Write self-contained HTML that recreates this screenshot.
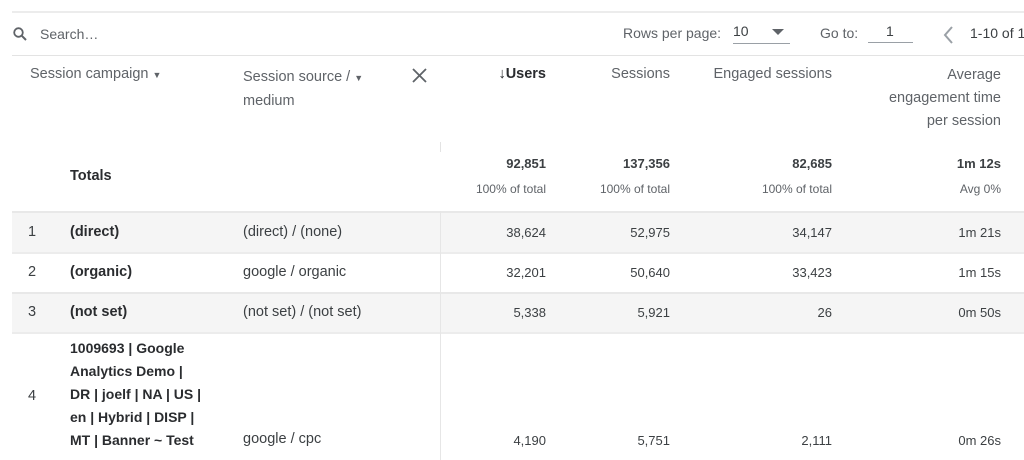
<html><head><style>
body{margin:0;width:1024px;height:460px;overflow:hidden;background:#fff;font-family:"Liberation Sans",sans-serif;color:#3c4043;position:relative}
.a{position:absolute;white-space:nowrap}
.h{color:#5f6368;font-size:14.5px}
.r{text-align:right}
.line{position:absolute;left:12px;right:0;height:1px;background:#e3e3e3}
.row{position:absolute;left:12px;right:0;height:40px}
.d{font-size:14.5px;color:#3c4043}
.b{font-weight:bold;color:#2a2c2f}
.n{font-size:13px;color:#3c4043}
.s{font-size:12px;color:#5f6368}
</style></head><body>
<div class="line" style="top:11px;height:2px;background:#ececec"></div>
<svg class="a" style="left:12px;top:26px" width="16" height="16" viewBox="0 0 16 16"><circle cx="6.5" cy="6.5" r="4.3" fill="none" stroke="#5f6368" stroke-width="1.8"/><path d="M9.7 9.7L14 14" stroke="#5f6368" stroke-width="2"/></svg>
<div class="a h" style="left:40px;top:26px;font-size:14px">Search…</div>
<div class="a h" style="left:623px;top:25px;font-size:14px">Rows per page:</div>
<div class="a" style="left:733px;top:23px;font-size:14px;color:#3c4043">10</div>
<svg class="a" style="left:772px;top:29px" width="12" height="7"><path d="M0 0h12L6 6z" fill="#5f6368"/></svg>
<div class="a" style="left:733px;top:43px;width:57px;height:1px;background:#9aa0a6"></div>
<div class="a h" style="left:820px;top:25px;font-size:14px">Go to:</div>
<div class="a" style="left:886px;top:23px;font-size:14px;color:#3c4043">1</div>
<div class="a" style="left:868px;top:42px;width:45px;height:1px;background:#9aa0a6"></div>
<svg class="a" style="left:942px;top:25px" width="12" height="20"><path d="M10 2L3 10l7 8" fill="none" stroke="#9aa0a6" stroke-width="2"/></svg>
<div class="a" style="left:970px;top:25px;font-size:14px;color:#3c4043">1-10 of 1</div>
<div class="line" style="top:55px"></div>

<div class="a h" style="left:30px;top:66px">Session campaign <span style="font-size:9px">▼</span></div>
<div class="a h" style="left:243px;top:66px;line-height:23px">Session source / <span style="font-size:9px">▼</span><br>medium</div>
<svg class="a" style="left:412px;top:68px" width="15" height="15"><path d="M1 1L14 14M14 1L1 14" stroke="#5f6368" stroke-width="1.8"/></svg>
<div class="a r b" style="right:478px;top:66px;font-size:14.5px">↓Users</div>
<div class="a h r" style="right:354px;top:66px">Sessions</div>
<div class="a h r" style="right:192px;top:66px">Engaged sessions</div>
<div class="a h r" style="right:23px;top:64px;line-height:23px">Average<br>engagement time<br>per session</div>

<div class="a" style="left:440px;top:142px;width:1px;height:10px;background:#e3e3e3"></div>
<div class="a d b" style="left:70px;top:168px">Totals</div>
<div class="a r n b" style="right:478px;top:156px">92,851</div>
<div class="a r s" style="right:478px;top:182px">100% of total</div>
<div class="a r n b" style="right:354px;top:156px">137,356</div>
<div class="a r s" style="right:354px;top:182px">100% of total</div>
<div class="a r n b" style="right:192px;top:156px">82,685</div>
<div class="a r s" style="right:192px;top:182px">100% of total</div>
<div class="a r n b" style="right:23px;top:156px">1m 12s</div>
<div class="a r s" style="right:23px;top:182px">Avg 0%</div>

<div class="row" style="top:211px;background:#f5f5f5;border-top:2px solid #e8e8e8"></div>
<div class="row" style="top:252px;border-top:2px solid #ececec"></div>
<div class="row" style="top:292px;background:#f5f5f5;border-top:2px solid #e8e8e8"></div>
<div class="line" style="top:332px;height:2px;background:#ececec"></div>
<div class="a" style="left:440px;top:211px;width:1px;height:249px;background:#e6e6e6"></div>

<div class="a d" style="left:28px;top:224px">1</div>
<div class="a d b" style="left:70px;top:224px">(direct)</div>
<div class="a d" style="left:243px;top:224px">(direct) / (none)</div>
<div class="a r n" style="right:478px;top:225px">38,624</div>
<div class="a r n" style="right:354px;top:225px">52,975</div>
<div class="a r n" style="right:192px;top:225px">34,147</div>
<div class="a r n" style="right:23px;top:225px">1m 21s</div>

<div class="a d" style="left:28px;top:264px">2</div>
<div class="a d b" style="left:70px;top:264px">(organic)</div>
<div class="a d" style="left:243px;top:264px">google / organic</div>
<div class="a r n" style="right:478px;top:265px">32,201</div>
<div class="a r n" style="right:354px;top:265px">50,640</div>
<div class="a r n" style="right:192px;top:265px">33,423</div>
<div class="a r n" style="right:23px;top:265px">1m 15s</div>

<div class="a d" style="left:28px;top:304px">3</div>
<div class="a d b" style="left:70px;top:304px">(not set)</div>
<div class="a d" style="left:243px;top:304px">(not set) / (not set)</div>
<div class="a r n" style="right:478px;top:305px">5,338</div>
<div class="a r n" style="right:354px;top:305px">5,921</div>
<div class="a r n" style="right:192px;top:305px">26</div>
<div class="a r n" style="right:23px;top:305px">0m 50s</div>

<div class="a d" style="left:28px;top:388px">4</div>
<div class="a d b" style="left:70px;top:337px;line-height:23px;font-size:14px">1009693 | Google<br>Analytics Demo |<br>DR | joelf | NA | US |<br>en | Hybrid | DISP |<br>MT | Banner ~ Test</div>
<div class="a d" style="left:243px;top:431px">google / cpc</div>
<div class="a r n" style="right:478px;top:433px">4,190</div>
<div class="a r n" style="right:354px;top:433px">5,751</div>
<div class="a r n" style="right:192px;top:433px">2,111</div>
<div class="a r n" style="right:23px;top:433px">0m 26s</div>
</body></html>
